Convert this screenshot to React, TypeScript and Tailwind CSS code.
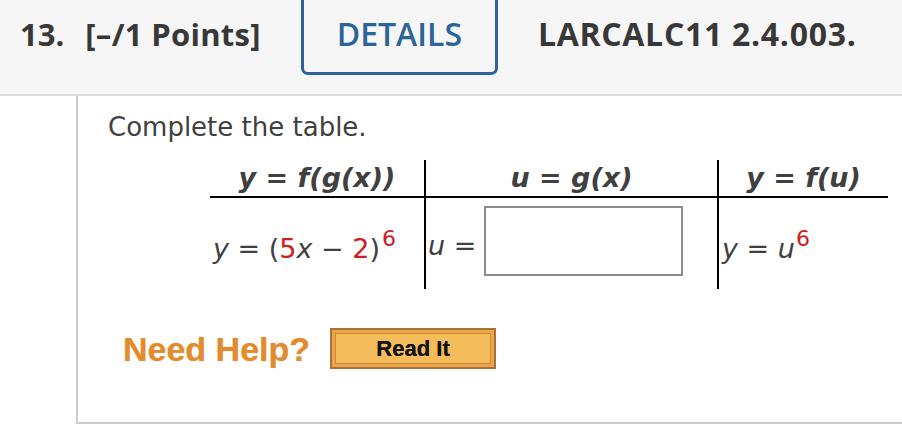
export default function App() {
  const dv = { fontFamily: '"DejaVu Sans", Verdana, sans-serif' };
  return (
    <div className="w-[902px] h-[426px] bg-white overflow-hidden">
      <div
        className="h-[96px] bg-[#f6f6f6] border-b-2 border-[#dddddd] flex items-start overflow-hidden text-[#383838]"
        style={{ fontFamily: '"Open Sans", sans-serif' }}
      >
        <div className="flex pl-[20px] pt-[14px] font-bold leading-[40px] whitespace-nowrap">
          <span className="text-[31px]">13.</span>
          <span className="ml-[21px] text-[31px] tracking-[0.3px]">[–/1 Points]</span>
        </div>
        <div className="ml-[40px] -mt-[6px] h-[81px] w-[197px] shrink-0 border-[3px] border-[#2c6399] rounded-[7px] flex justify-center pt-[17px] text-[#2c6399] font-semibold text-[32px] leading-[40px]">
          DETAILS
        </div>
        <div className="ml-[40px] pt-[14px] text-[32px] font-bold leading-[40px] tracking-[0.7px] whitespace-nowrap">
          LARCALC11 2.4.003.
        </div>
      </div>

      <div className="ml-[76px] h-[328px] border-l-2 border-b-2 border-[#cccccc] pl-[30px] pt-[16px] text-[#404040]" style={dv}>
        <div className="text-[26px] leading-[30px]">Complete the table.</div>

        <div className="ml-[102px] mt-[18px] grid grid-cols-[216px_293px_169px] text-[27px] leading-[32px]">
          <div className="h-[38px] border-r-2 border-b-2 border-black flex items-center justify-center font-bold italic whitespace-nowrap">
            y = f(g(x))
          </div>
          <div className="h-[38px] border-r-2 border-b-2 border-black flex items-center justify-center font-bold italic whitespace-nowrap">
            u = g(x)
          </div>
          <div className="h-[38px] border-b-2 border-black flex items-center justify-center font-bold italic whitespace-nowrap">
            y = f(u)
          </div>

          <div className="h-[91px] border-r-2 border-black pl-[3px] pt-[35px] whitespace-nowrap">
            <i>y</i> = (<span className="text-[#cc2020]">5</span><i>x</i> − <span className="text-[#cc2020]">2</span>)
            <sup className="ml-[2px] text-[#cc2020] text-[22px] -top-[12px]">6</sup>
          </div>
          <div className="h-[91px] border-r-2 border-black pl-[2px] pt-[8px] flex items-start">
            <span className="mt-[24px] w-[56px] shrink-0 whitespace-nowrap">
              <i>u</i> =
            </span>
            <div className="w-[199px] h-[70px] border-2 border-[#8a8a8a] bg-white" />
          </div>
          <div className="h-[91px] pl-[3px] pt-[35px] whitespace-nowrap">
            <i>y</i> = <i>u</i>
            <sup className="ml-[1px] text-[#cc2020] text-[22px] -top-[12px]">6</sup>
          </div>
        </div>

        <div className="mt-[39px] ml-[15px] flex items-center" style={{ fontFamily: '"Liberation Sans", Arial, sans-serif' }}>
          <span className="text-[34px] font-bold text-[#e38b2f] leading-none [text-shadow:0_0_1px_#f3b77a]">Need Help?</span>
          <div className="ml-[20px] w-[166px] h-[41px] border-2 border-[#a8733a] bg-[#eea546] p-[3px]">
            <div className="w-full h-full border border-[#c98a3c] bg-[#f4bc5a] flex items-center justify-center text-[22px] font-bold text-[#141414] leading-none [text-shadow:0_0_0.5px_#141414]">
              Read It
            </div>
          </div>
        </div>
      </div>
    </div>
  );
}
